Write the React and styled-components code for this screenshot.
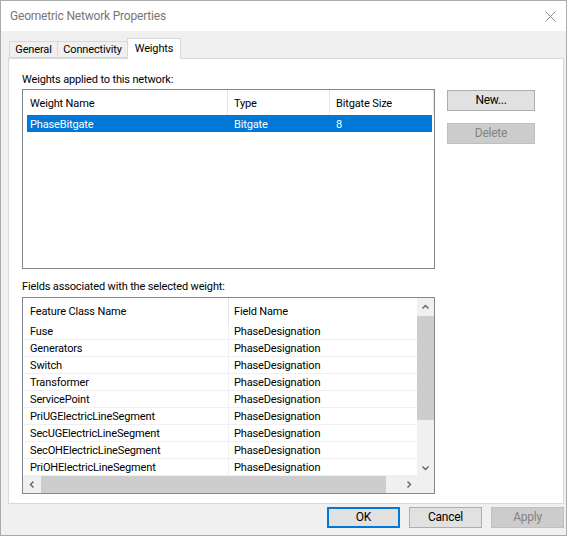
import React from 'react';
import styled, { createGlobalStyle } from 'styled-components';

const FONT = 'Roboto, "Liberation Sans", sans-serif';

const GlobalStyle = createGlobalStyle`
  html, body {
    margin: 0;
    padding: 0;
    background: #ffffff;
  }
  body {
    font-family: ${FONT};
    font-size: 11px;
    letter-spacing: -0.15px;
    color: #000;
  }
  * {
    box-sizing: border-box;
  }
`;

const Window = styled.div`
  width: 567px;
  height: 536px;
  border: 1px solid #aaaaaa;
  background: #f0f0f0;
  display: flex;
  flex-direction: column;
`;

const TitleBar = styled.div`
  height: 30px;
  background: #ffffff;
  display: flex;
  align-items: center;
  justify-content: space-between;
  padding: 0 10px 0 9px;
`;

const Title = styled.span`
  color: #777777;
  font-size: 12px;
  letter-spacing: -0.2px;
`;

const CloseBox = styled.div`
  width: 12px;
  height: 12px;
  display: flex;
  align-items: center;
  justify-content: center;
`;

const TabStrip = styled.div`
  display: flex;
  align-items: flex-end;
  height: 20px;
  margin: 7px 0 0 8px;
`;

const Tab = styled.div`
  height: ${({ active }) => (active ? '21px' : '17px')};
  margin-bottom: ${({ active }) => (active ? '-1px' : '0')};
  width: ${({ w }) => w}px;
  background: ${({ active }) => (active ? '#ffffff' : '#f0f0f0')};
  border: 1px solid #d9d9d9;
  border-bottom: ${({ active }) => (active ? 'none' : '1px solid #d9d9d9')};
  border-right: ${({ last }) => (last ? '1px solid #d9d9d9' : 'none')};
  display: flex;
  align-items: center;
  justify-content: center;
  padding-bottom: ${({ active }) => (active ? '2px' : '0')};
  position: relative;
  z-index: ${({ active }) => (active ? 1 : 0)};
`;

const Panel = styled.div`
  margin-left: 7px;
  width: 556px;
  height: 446px;
  background: #ffffff;
  border: 1px solid #d9d9d9;
  padding: 12px 0 0 13px;
  display: flex;
  flex-direction: column;
`;

const Label = styled.div`
  line-height: 15px;
  height: 15px;
  padding-top: 1px;
  margin-top: ${({ mt }) => mt || 0}px;
`;

const TopRow = styled.div`
  display: flex;
  align-items: flex-start;
  margin-top: 3px;
`;

const ListBox = styled.div`
  width: 413px;
  height: ${({ h }) => h}px;
  border: 1px solid #828790;
  background: #ffffff;
  margin-top: ${({ mt }) => mt || 0}px;
  overflow: hidden;
`;

const HeaderRow = styled.div`
  display: grid;
  grid-template-columns: ${({ cols }) => cols};
  height: 25px;
`;

const HeaderCell = styled.div`
  display: flex;
  align-items: center;
  padding-left: ${({ pl }) => pl || 6}px;
  padding-top: 1px;
  height: 100%;
  border-right: ${({ sep }) => (sep ? '1px solid #e5e5e5' : 'none')};
  white-space: nowrap;
`;

const SelectedRow = styled.div`
  display: grid;
  grid-template-columns: 201px 102px 105px;
  height: 17px;
  margin-left: 4px;
  width: 405px;
  background: #0078d7;
  color: #ffffff;
`;

const Cell = styled.div`
  display: flex;
  align-items: center;
  padding-left: ${({ pl }) => pl || 6}px;
  padding-top: 1px;
  white-space: nowrap;
  overflow: hidden;
  border-right: ${({ grid }) => (grid ? '1px solid #f0f0f0' : 'none')};
`;

const SideButtons = styled.div`
  display: flex;
  flex-direction: column;
  gap: 12px;
  margin: 1px 0 0 12px;
`;

const Button = styled.div`
  width: ${({ w }) => w}px;
  height: 21px;
  background: ${({ disabled }) => (disabled ? '#cccccc' : '#e1e1e1')};
  border: ${({ primary, disabled }) =>
    primary ? '2px solid #0078d7' : disabled ? '1px solid #bfbfbf' : '1px solid #adadad'};
  color: ${({ disabled }) => (disabled ? '#838383' : '#000000')};
  font-size: 12px;
  letter-spacing: -0.25px;
  display: flex;
  align-items: center;
  justify-content: center;
  padding-bottom: 1px;
`;

const FieldsGrid = styled.div`
  display: grid;
  grid-template-columns: 394px 17px;
  grid-template-rows: 178px 17px;
`;

const Content = styled.div`
  overflow: hidden;
`;

const FieldRow = styled.div`
  display: grid;
  grid-template-columns: 206px 188px;
  height: 17px;
  border-bottom: 1px solid #f0f0f0;
`;

const VScroll = styled.div`
  background: #f0f0f0;
  display: grid;
  grid-template-rows: 18px 104px 1fr 17px;
`;

const HScroll = styled.div`
  background: #f0f0f0;
  display: grid;
  grid-template-columns: 18px 345px 1fr 17px;
`;

const Arrow = styled.div`
  display: flex;
  align-items: center;
  justify-content: center;
`;

const Thumb = styled.div`
  background: #cdcdcd;
`;

const Corner = styled.div`
  background: #f0f0f0;
`;

const Footer = styled.div`
  display: flex;
  justify-content: flex-end;
  gap: 9px;
  margin-top: 3px;
  padding-right: 2px;
`;

const Chevron = ({ dir }) => {
  const paths = {
    up: 'M0.5 4.5 L3.5 1.5 L6.5 4.5',
    down: 'M0.5 1.5 L3.5 4.5 L6.5 1.5',
    left: 'M4.5 0.5 L1.5 3.5 L4.5 6.5',
    right: 'M1.5 0.5 L4.5 3.5 L1.5 6.5',
  };
  const vertical = dir === 'up' || dir === 'down';
  return (
    <svg width={vertical ? 7 : 6} height={vertical ? 6 : 7} viewBox={vertical ? '0 0 7 6' : '0 0 6 7'}>
      <path d={paths[dir]} fill="none" stroke="#606060" strokeWidth="1.4" />
    </svg>
  );
};

const fields = [
  'Fuse',
  'Generators',
  'Switch',
  'Transformer',
  'ServicePoint',
  'PriUGElectricLineSegment',
  'SecUGElectricLineSegment',
  'SecOHElectricLineSegment',
  'PriOHElectricLineSegment',
];

const App = () => {
  return (
    <>
      <GlobalStyle />
      <Window>
        <TitleBar>
          <Title>Geometric Network Properties</Title>
          <CloseBox>
            <svg width="11" height="11" viewBox="0 0 11 11">
              <path d="M0.5 0.5 L10.5 10.5 M10.5 0.5 L0.5 10.5" stroke="#8a8a8a" strokeWidth="1" />
            </svg>
          </CloseBox>
        </TitleBar>

        <TabStrip>
          <Tab w={48}>General</Tab>
          <Tab w={70}>Connectivity</Tab>
          <Tab w={54} active last>Weights</Tab>
        </TabStrip>

        <Panel>
          <Label>Weights applied to this network:</Label>
          <TopRow>
            <ListBox h={180}>
              <HeaderRow cols="205px 102px 104px">
                <HeaderCell pl={7} sep>Weight Name</HeaderCell>
                <HeaderCell sep>Type</HeaderCell>
                <HeaderCell sep>Bitgate Size</HeaderCell>
              </HeaderRow>
              <SelectedRow>
                <Cell pl={3}>PhaseBitgate</Cell>
                <Cell>Bitgate</Cell>
                <Cell>8</Cell>
              </SelectedRow>
            </ListBox>
            <SideButtons>
              <Button w={88}>New...</Button>
              <Button w={88} disabled>Delete</Button>
            </SideButtons>
          </TopRow>

          <Label mt={9}>Fields associated with the selected weight:</Label>
          <ListBox h={197} mt={4}>
            <FieldsGrid>
              <Content>
                <HeaderRow cols="206px 188px">
                  <HeaderCell pl={7} sep>Feature Class Name</HeaderCell>
                  <HeaderCell pl={5}>Field Name</HeaderCell>
                </HeaderRow>
                {fields.map((f) => (
                  <FieldRow key={f}>
                    <Cell pl={7} grid>{f}</Cell>
                    <Cell pl={5}>PhaseDesignation</Cell>
                  </FieldRow>
                ))}
              </Content>
              <VScroll>
                <Arrow><Chevron dir="up" /></Arrow>
                <Thumb />
                <div />
                <Arrow><Chevron dir="down" /></Arrow>
              </VScroll>
              <HScroll>
                <Arrow><Chevron dir="left" /></Arrow>
                <Thumb />
                <div />
                <Arrow><Chevron dir="right" /></Arrow>
              </HScroll>
              <Corner />
            </FieldsGrid>
          </ListBox>
        </Panel>

        <Footer>
          <Button w={73} primary>OK</Button>
          <Button w={73}>Cancel</Button>
          <Button w={73} disabled>Apply</Button>
        </Footer>
      </Window>
    </>
  );
};

export default App;
